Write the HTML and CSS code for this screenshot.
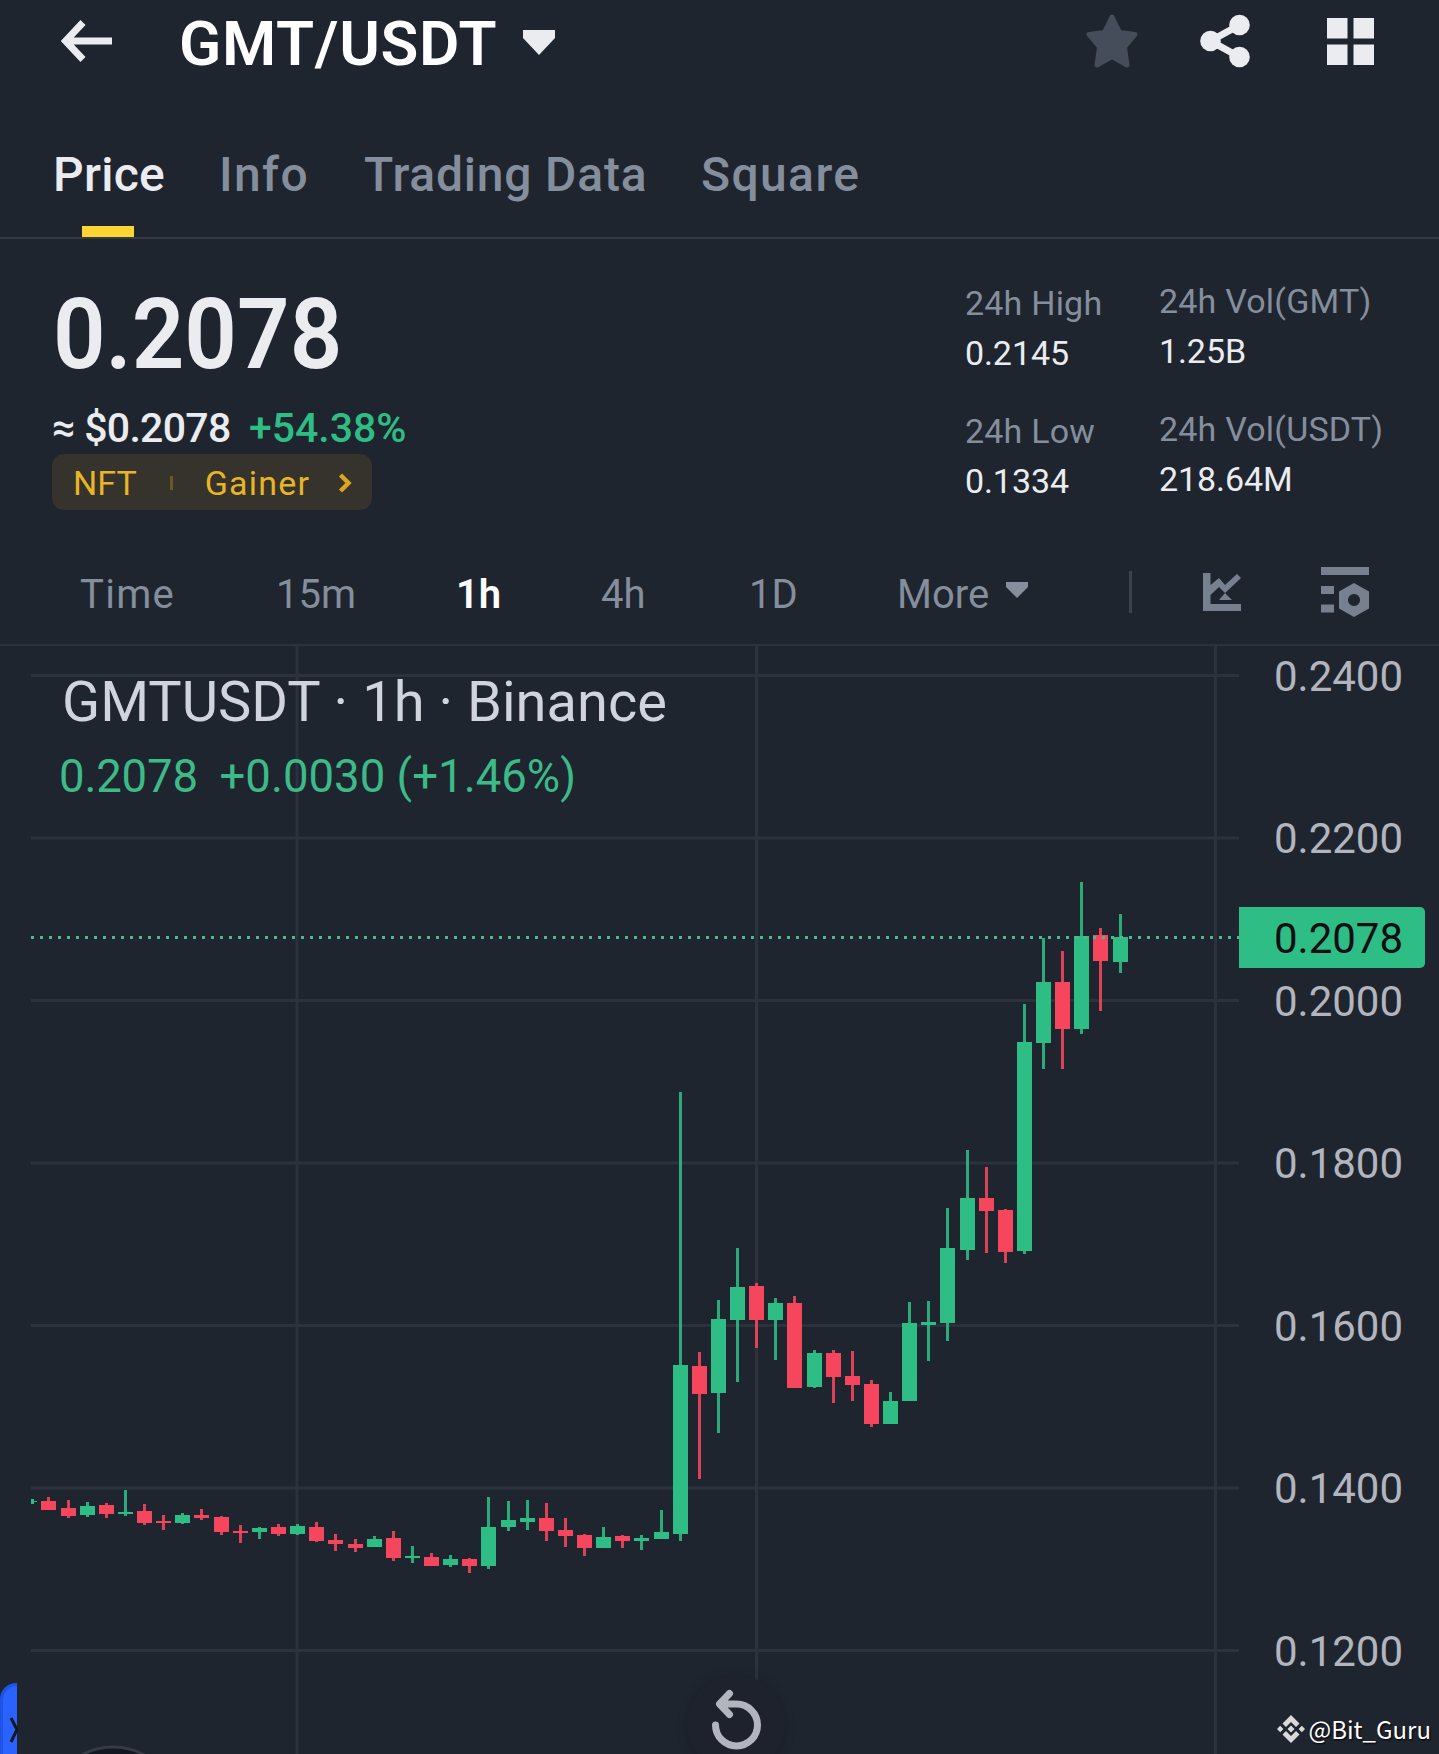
FILE: index.html
```html
<!DOCTYPE html>
<html lang="en">
<head>
    <meta charset="UTF-8">
    <meta name="viewport" content="width=device-width, initial-scale=1.0">
    <title>GMT/USDT</title>
    <link rel="stylesheet" href="styles.css">
</head>
<body>
    <header class="header">
        <svg class="icon-back" width="52" height="42" viewBox="0 0 52 42">
            <path d="M51 21H5M22 2.500L4.500 21L22 39.500" fill="none" stroke="#eaecef" stroke-width="7"/>
        </svg>
        <h1 class="pair">GMT/USDT</h1>
        <svg class="icon-caret" width="32" height="25" viewBox="0 0 32 25">
            <path d="M0 0H32V8L16 25L0 8Z" fill="#eaecef"/>
        </svg>
        <div class="actions">
            <svg width="52" height="54" viewBox="0 0 52 54">
                <path d="M26 3L33.500 18.500L49 20.500L38.500 33L41 51L26 42.500L11 51L13.500 33L3 20.500L18.500 18.500Z" fill="#454d5b" stroke="#454d5b" stroke-width="5" stroke-linejoin="round"/>
            </svg>
            <svg width="50" height="54" viewBox="0 0 50 54">
                <path d="M39.500 11L10.500 27L39.500 43" fill="none" stroke="#eaecef" stroke-width="7"/>
                <g fill="#eaecef"><circle cx="39.500" cy="11" r="10.300"/><circle cx="10.500" cy="27" r="10.300"/><circle cx="39.500" cy="43" r="10.300"/></g>
            </svg>
            <svg width="47" height="47" viewBox="0 0 47 47">
                <path d="M0 0H20.500V20.500H0ZM26.500 0H47V20.500H26.500ZM0 26.500H20.500V47H0ZM26.500 26.500H47V47H26.500Z" fill="#eaecef"/>
            </svg>
        </div>
    </header>

    <nav class="tabs">
        <a class="tab active">Price</a>
        <a class="tab">Info</a>
        <a class="tab trading">Trading Data</a>
        <a class="tab">Square</a>
    </nav>

    <section class="summary">
        <div class="left">
            <div class="price">0.2078</div>
            <div class="fiat">
                <span class="usd">≈ $0.2078</span>
                <span class="change">+54.38%</span>
            </div>
            <div class="tags">
                <span>NFT</span>
                <i class="tag-line"></i>
                <span class="gainer">Gainer</span>
                <svg width="14" height="20" viewBox="0 0 14 20"><path d="M2.500 2L10.500 10L2.500 18" fill="none" stroke="#d9a520" stroke-width="4.500"/></svg>
            </div>
        </div>
        <div class="stats stats-price">
            <div class="label">24h High</div>
            <div class="value">0.2145</div>
            <div class="label">24h Low</div>
            <div class="value">0.1334</div>
        </div>
        <div class="stats stats-vol">
            <div class="label">24h Vol(GMT)</div>
            <div class="value">1.25B</div>
            <div class="label">24h Vol(USDT)</div>
            <div class="value">218.64M</div>
        </div>
    </section>

    <div class="intervals">
        <span class="time">Time</span>
        <span>15m</span>
        <span class="active">1h</span>
        <span>4h</span>
        <span>1D</span>
        <span class="more">More
            <svg width="22" height="16" viewBox="0 0 22 16"><path d="M0 0H22V5L11 16L0 5Z" fill="#848e9c"/></svg>
        </span>
        <i class="separator"></i>
        <svg width="38" height="38" viewBox="0 0 38 38">
            <path d="M0 0H7.500V12L16 5L22 12L34 1L38 5L22 20L16 14L7.500 22V31H38V38H0ZM22 20L29 27H16Z" fill="#76808f"/>
        </svg>
        <svg width="48" height="50" viewBox="0 0 48 50">
            <path d="M0 0H48V8H0ZM0 19H13V27H0ZM0 37.500H13V45.500H0Z" fill="#76808f"/>
            <path d="M33 16L48 24.500V41.500L33 50L18 41.500V24.500ZM33 27a6 6 0 1 0 0.010 0Z" fill="#76808f" fill-rule="evenodd"/>
        </svg>
    </div>

    <main class="chart">
        <svg id="chart" width="1439" height="1110" viewBox="0 644 1439 1110">
            <path class="top-line" d="M0 644.500H1439"/>
            <g id="grid"></g>
            <g id="candles"></g>
            <path class="price-line" d="M31 937.500H1239"/>
            <g id="axis"></g>
            <path class="price-tag" d="M1239 907H1420a5 5 0 0 1 5 5V963a5 5 0 0 1 -5 5H1239Z"/>
            <text class="axis-label current" x="1274" y="953" textLength="129">0.2078</text>

            <text class="legend" x="62" y="721" textLength="605">GMTUSDT · 1h · Binance</text>
            <text class="legend-value" x="59" y="791.500" textLength="139">0.2078</text>
            <text class="legend-value" x="219.500" y="791.500" textLength="356.500">+0.0030 (+1.46%)</text>

            <!-- side drawer handle -->
            <path d="M17 1683H16A16 16 0 0 0 0 1699V1754H17Z" fill="#1e53e5"/>
            <path d="M17 1686A14 14 0 0 0 3 1700V1754H17Z" fill="#2962ff"/>
            <path d="M11 1718L17 1729.500L11 1742" fill="none" stroke="#131722" stroke-width="3"/>
            <circle cx="113" cy="1811" r="64" fill="#131722" stroke="#363a45" stroke-width="3"/>

            <!-- reset button -->
            <circle class="reset-bg" cx="736" cy="1724" r="49"/>
            <path class="reset" d="M715.500 1725A21 21 0 1 0 736.500 1704H720M729.500 1693.500L719.500 1704L729.500 1714.500"/>
        </svg>
        <div class="watermark">
            <svg width="28" height="28" viewBox="0 0 28 28">
                <path d="M14 0L22.500 8.500L19 12L14 7L9 12L5.500 8.500ZM14 28L22.500 19.500L19 16L14 21L9 16L5.500 19.500ZM14 10.500L17.500 14L14 17.500L10.500 14ZM3.200 10.800L6.400 14L3.200 17.200L0 14ZM24.800 10.800L28 14L24.800 17.200L21.600 14Z" fill="#d9d9d9"/>
            </svg>
            <span>@Bit_Guru</span>
        </div>
    </main>

<script>
    // x, high, body top, body bottom, low, direction
    const candles = [
        [48, 1497, 1501, 1510, 1510, "down"], [68, 1500, 1508, 1516, 1518, "down"],
        [87, 1502, 1506, 1515, 1517, "up"], [106, 1503, 1505, 1514, 1518, "down"],
        [125, 1490, 1512, 1514, 1516, "up"], [144, 1504, 1511, 1523, 1525, "down"],
        [163, 1515, 1521, 1523, 1530, "down"], [182, 1513, 1515, 1523, 1524, "up"],
        [201, 1509, 1515, 1518, 1520, "down"], [221, 1516, 1517, 1532, 1535, "down"],
        [240, 1525, 1531, 1533, 1543, "down"], [259, 1527, 1528, 1532, 1539, "up"],
        [278, 1524, 1527, 1534, 1536, "down"], [297, 1524, 1526, 1534, 1535, "up"],
        [316, 1522, 1527, 1541, 1542, "down"], [335, 1534, 1540, 1544, 1551, "down"],
        [355, 1539, 1544, 1548, 1552, "down"], [374, 1536, 1539, 1547, 1547, "up"],
        [393, 1531, 1538, 1558, 1561, "down"], [412, 1546, 1556, 1558, 1563, "up"],
        [431, 1553, 1557, 1566, 1566, "down"], [450, 1555, 1559, 1565, 1567, "up"],
        [469, 1558, 1559, 1566, 1573, "down"], [488, 1497, 1527, 1566, 1569, "up"],
        [508, 1501, 1520, 1527, 1531, "up"], [527, 1500, 1518, 1522, 1530, "up"],
        [546, 1503, 1518, 1531, 1541, "down"], [565, 1518, 1530, 1536, 1547, "down"],
        [584, 1534, 1535, 1548, 1556, "down"], [603, 1527, 1537, 1548, 1548, "up"],
        [622, 1535, 1536, 1541, 1548, "down"], [641, 1535, 1538, 1541, 1550, "up"],
        [661, 1510, 1532, 1539, 1539, "up"], [680, 1092, 1365, 1534, 1541, "up"],
        [699, 1352, 1366, 1394, 1479, "down"], [718, 1300, 1319, 1393, 1433, "up"],
        [737, 1248, 1287, 1320, 1382, "up"], [756, 1283, 1286, 1320, 1348, "down"],
        [775, 1298, 1303, 1320, 1360, "up"], [794, 1296, 1303, 1388, 1388, "down"],
        [814, 1350, 1353, 1387, 1388, "up"], [833, 1350, 1353, 1377, 1403, "down"],
        [852, 1351, 1376, 1385, 1401, "down"], [871, 1380, 1384, 1424, 1427, "down"],
        [890, 1392, 1401, 1424, 1424, "up"], [909, 1302, 1323, 1401, 1401, "up"],
        [928, 1301, 1322, 1325, 1361, "up"], [947, 1208, 1248, 1323, 1341, "up"],
        [967, 1150, 1198, 1250, 1260, "up"], [986, 1167, 1198, 1211, 1253, "down"],
        [1005, 1209, 1210, 1252, 1263, "down"], [1024, 1004, 1042, 1251, 1254, "up"],
        [1043, 938, 982, 1043, 1069, "up"], [1062, 951, 982, 1029, 1069, "down"],
        [1081, 882, 936, 1029, 1034, "up"], [1100, 928, 935, 961, 1011, "down"],
        [1120, 914, 937, 962, 973, "up"]
    ];

    const levels = ["0.2400", "0.2200", "0.2000", "0.1800", "0.1600", "0.1400", "0.1200"];

    let grid = "";
    let axis = "";
    levels.forEach((level, i) => {
        let y = 675.5 + i * 162.5;
        grid += `<path d="M31 ${y}H1239"/>`;
        axis += `<text class="axis-label" x="1274" y="${y + 15}" textLength="129">${level}</text>`;
    });
    [297, 756.5, 1215.5].forEach(x => {
        grid += `<path d="M${x} 644V1754"/>`;
    });
    document.getElementById("grid").innerHTML = grid;
    document.getElementById("axis").innerHTML = axis;

    // the oldest candle is cut off by the pane edge
    let bars = `<path class="up" d="M31 1499h3v2h3v1h-3v2h-3z"/>`;
    candles.forEach(([x, high, top, bottom, low, dir]) => {
        bars += `<rect class="${dir} wick" x="${x - 1}" y="${high}" width="3" height="${low - high}"/>`;
        bars += `<rect class="${dir}" x="${x - 7}" y="${top}" width="15" height="${bottom - top}"/>`;
    });
    document.getElementById("candles").innerHTML = bars;
</script>
</body>
</html>
```
FILE: styles.css
```css
* {
    box-sizing: border-box;
}
body {
    margin: 0;
    width: 1439px;
    height: 1754px;
    overflow: hidden;
    background: #1f252f;
    color: #eaecef;
    font-family: Roboto, "Liberation Sans", sans-serif;
}
svg {
    display: block;
    flex: none;
}
.header {
    display: flex;
    align-items: center;
    height: 82px;
    padding: 0 65px 0 61px;
}
.pair {
    width: 344px;
    margin: 5px 0 0 66px;
    font-size: 62px;
    font-weight: 600;
    line-height: 74px;
    letter-spacing: 0.7px;
    color: #fff;
}
.icon-caret {
    margin-top: 2px;
}
.actions {
    display: flex;
    align-items: center;
    margin-left: auto;
}
.actions svg:nth-child(2) {
    margin: 0 77px 0 62px;
}

/* tabs */
.tabs {
    display: grid;
    grid-template-columns: 166px 145px 337px 200px;
    height: 157px;
    padding: 63px 0 0 53px;
    border-bottom: 2px solid #333b47;
    font-size: 48px;
    font-weight: 500;
    line-height: 60px;
    letter-spacing: 1.4px;
    color: #848e9c;
}
.tab {
    white-space: nowrap;
}
.tab.trading {
    letter-spacing: 0.8px;
}
.tab.active {
    letter-spacing: 0.3px;
    color: #eaecef;
}
.tab.active::after {
    content: "";
    display: block;
    width: 52px;
    height: 11px;
    margin: 21px 0 0 29px;
    background: #fcd535;
}

/* price and 24h stats */
.summary {
    display: flex;
    height: 305px;
}
.left {
    width: 965px;
    padding-left: 52px;
}
.price {
    height: 148px;
    padding: 46px 0 0 1px;
    font-size: 98px;
    font-weight: 600;
    line-height: 100px;
    transform: scaleX(0.94);
    transform-origin: left;
}
.fiat {
    display: flex;
    height: 67px;
    padding-top: 16px;
    font-size: 41px;
    font-weight: 500;
    line-height: 50px;
}
.usd {
    width: 197px;
    letter-spacing: -0.7px;
}
.change {
    color: #2ebd85;
}
.tags {
    display: flex;
    align-items: center;
    width: 320px;
    height: 56px;
    padding: 1px 20px 0 21px;
    border-radius: 12px;
    background: #35332b;
    color: #e8b526;
    font-size: 34px;
}
.tag-line {
    width: 3px;
    height: 14px;
    margin: 0 32px 0 33px;
    background: #6b5826;
}
.gainer {
    letter-spacing: 1.2px;
}
.tags svg {
    margin-left: auto;
}
.stats {
    white-space: nowrap;
    font-size: 34px;
    line-height: 50px;
}
.stats-price {
    width: 194px;
    padding-top: 39px;
}
.stats-vol {
    padding-top: 37px;
}
.label {
    letter-spacing: 0.2px;
    color: #848e9c;
}
.value {
    margin-bottom: 28px;
    letter-spacing: -0.1px;
}

/* interval bar */
.intervals {
    display: grid;
    grid-template-columns: 196px 180px 145px 148px 148px 232px 74px 118px 48px;
    align-items: center;
    height: 100px;
    padding: 0 0 4px 80px;
    font-size: 40px;
    color: #848e9c;
}
.intervals span {
    padding-top: 4px;
}
.intervals .time {
    letter-spacing: 1.3px;
}
.intervals .active {
    color: #fff;
    font-weight: 600;
}
.more {
    display: flex;
    align-items: center;
    gap: 17px;
}
.more svg {
    margin-bottom: 9px;
}
.separator {
    width: 3px;
    height: 42px;
    background: #3a424e;
}

/* chart */
.chart {
    position: relative;
    height: 1110px;
}
.top-line, #grid path {
    stroke: #2c323c;
    stroke-width: 3;
}
.up {
    fill: #2ebd85;
}
.down {
    fill: #f6465d;
}
.wick {
    opacity: 0.88;
}
.price-line {
    stroke: #4cb991;
    stroke-width: 3;
    stroke-dasharray: 3 6;
}
.price-tag {
    fill: #2ebd85;
}
.axis-label {
    font-size: 42px;
    fill: #b2b5be;
}
.axis-label.current {
    fill: #0c0e12;
}
.legend {
    font-size: 56px;
    fill: #d1d4dc;
}
.legend-value {
    font-size: 45.500px;
    fill: #3cba88;
}
.reset-bg {
    fill: #1e222d;
    filter: drop-shadow(0 2px 5px rgba(0, 0, 0, 0.25));
}
.reset {
    fill: none;
    stroke: #b2b5be;
    stroke-width: 7;
    stroke-linecap: round;
    stroke-linejoin: round;
}
.watermark {
    position: absolute;
    right: 8px;
    bottom: 7px;
    display: flex;
    align-items: center;
    gap: 3px;
    color: #fff;
    font-family: "Noto Sans CJK SC", "Noto Sans", sans-serif;
    font-size: 24px;
    font-weight: 400;
    line-height: 36px;
    text-shadow: 1px 1px 2px #000;
}
```
